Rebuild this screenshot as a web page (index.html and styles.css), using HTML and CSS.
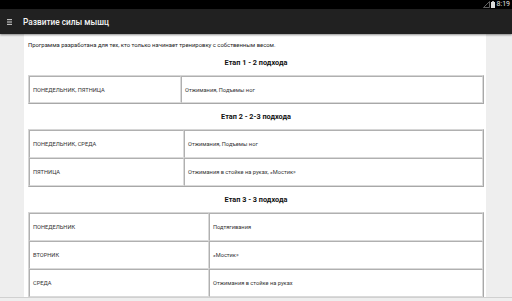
FILE: index.html
```html
<!DOCTYPE html>
<html lang="ru">
<head>
<meta charset="utf-8">
<link rel="stylesheet" href="styles.css">
</head>
<body>
<div class="status">
  <svg class="sig" width="7" height="7" viewBox="0 0 7 7"><path d="M0.5 6.5 L6.5 0.5 L6.5 6.5 Z" fill="none" stroke="#777" stroke-width="0.8"/></svg>
  <svg class="bat" width="4" height="7" viewBox="0 0 4 7"><rect x="1.2" y="0" width="1.6" height="1" fill="#ddd"/><rect x="0" y="1" width="4" height="6" fill="#ddd"/></svg>
  <span class="time">8:19</span>
</div>
<header class="toolbar">
  <svg class="menu" width="5" height="6" viewBox="0 0 5 6"><rect x="0" y="0" width="5" height="1.2" fill="#bbb"/><rect x="0" y="2.4" width="5" height="1.2" fill="#bbb"/><rect x="0" y="4.8" width="5" height="1.2" fill="#bbb"/></svg>
  <span class="title">Развитие силы мышц</span>
</header>
<main class="page">
  <div class="panel">
    <p class="intro">Программа разработана для тех, кто только начинает тренировку с собственным весом.</p>
    <h2 class="stage">Етап 1 - 2 подхода</h2>
    <table class="plan plan-1">
      <tr><td class="day">ПОНЕДЕЛЬНИК, ПЯТНИЦА</td><td>Отжимания, Подъемы ног</td></tr>
    </table>
    <h2 class="stage">Етап 2 - 2-3 подхода</h2>
    <table class="plan plan-2">
      <tr><td class="day">ПОНЕДЕЛЬНИК, СРЕДА</td><td>Отжимания, Подъемы ног</td></tr>
      <tr><td class="day">ПЯТНИЦА</td><td>Отжимания в стойке на руках, «Мостик»</td></tr>
    </table>
    <h2 class="stage">Етап 3 - 3 подхода</h2>
    <table class="plan plan-3">
      <tr><td class="day">ПОНЕДЕЛЬНИК</td><td>Подтягивания</td></tr>
      <tr><td class="day">ВТОРНИК</td><td>«Мостик»</td></tr>
      <tr><td class="day">СРЕДА</td><td>Отжимания в стойке на руках</td></tr>
      <tr><td class="day">ЧЕТВЕРГ</td><td>Подъемы ног</td></tr>
    </table>
  </div>
</main>
</body>
</html>
```
FILE: styles.css
```css
* { box-sizing: border-box; }
html, body {
  margin: 0;
  padding: 0;
  width: 512px;
  height: 301px;
  overflow: hidden;
  background: #eeeeee;
  font-family: Roboto, "Noto Sans", sans-serif;
}
.status {
  height: 9px;
  background: #000;
  display: flex;
  align-items: center;
  justify-content: flex-end;
  padding-right: 2px;
  gap: 1px;
}
.status .time {
  color: #e0e0e0;
  font-size: 7px;
  line-height: 9px;
  margin-left: 1px;
}
.toolbar {
  height: 25px;
  background: #212121;
  display: flex;
  align-items: center;
  padding-left: 7px;
  box-shadow: 0 1px 2px rgba(0,0,0,0.45);
  position: relative;
  z-index: 1;
}
.toolbar .title {
  color: #f4f4f4;
  font-size: 8.3px;
  font-weight: 500;
  margin-left: 11px;
}
.page {
  padding: 0 26px 0 24px;
  height: 264px;
  overflow: hidden;
  border-bottom: 1px solid #d0d0d0;
}
.panel {
  background: #fff;
  min-height: 264px;
  padding: 7px 2px 0 4px;
}
.intro {
  margin: 0;
  font-size: 5.9px;
  line-height: 9px;
  color: #222;
}
.stage {
  margin: 0;
  text-align: center;
  font-size: 7.3px;
  font-weight: bold;
  color: #111;
  line-height: 9px;
  padding: 8px 0 8px;
}
.plan {
  width: 456px;
  border-collapse: separate;
  border-spacing: 0;
  border: 1px solid;
  border-color: #d6d6d6 #a8a8a8 #a8a8a8 #d6d6d6;
  table-layout: fixed;
}
.plan td {
  border: 1px solid;
  border-color: #b0b0b0 #dadada #dadada #b0b0b0;
  font-size: 5.7px;
  color: #333;
  padding: 0 3px;
  height: 28px;
  vertical-align: middle;
}
.plan-1 td { height: 27px; }
.plan-1 .day { width: 152px; }
.plan-2 .day { width: 155px; }
.plan-3 .day { width: 180px; }
```
